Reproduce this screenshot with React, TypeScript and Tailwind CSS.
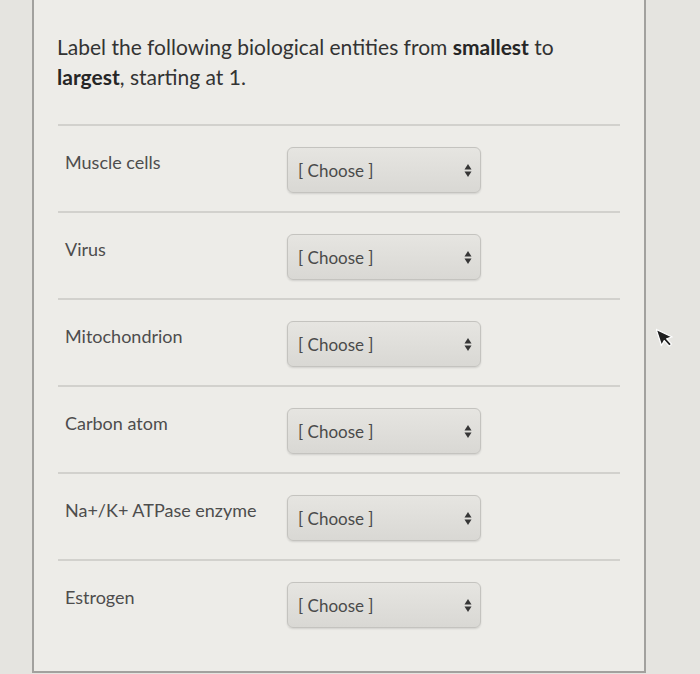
import React from "react";

const items = [
  "Muscle cells",
  "Virus",
  "Mitochondrion",
  "Carbon atom",
  "Na+/K+ ATPase enzyme",
  "Estrogen",
];

function Arrows() {
  return (
    <svg width="8" height="15" viewBox="0 0 8 15" className="shrink-0">
      <path d="M4 1 L7.5 6.5 L0.5 6.5 Z" fill="#363636" />
      <path d="M4 14 L7.5 8.5 L0.5 8.5 Z" fill="#363636" />
    </svg>
  );
}

function ChooseBox() {
  return (
    <div className="flex h-[46px] w-[194px] items-center justify-between rounded-[6px] border border-[#c4c3bf] bg-gradient-to-b from-[#e6e5e1] to-[#d9d8d4] pl-[10px] pr-[8px] shadow-[0_1px_2px_rgba(0,0,0,0.12)]">
      <span className="text-[17px] leading-none text-[#4a4a4a]">[ Choose ]</span>
      <Arrows />
    </div>
  );
}

export default function App() {
  return (
    <div
      className="relative h-[674px] w-[700px] overflow-hidden bg-[#e5e4e0]"
      style={{ fontFamily: "Lato, 'Open Sans', 'Noto Sans', sans-serif" }}
    >
      <div className="ml-[32px] flex h-[673px] w-[614px] flex-col border-x-2 border-b-2 border-[#a2a19e] bg-[#edece8]">
        <div className="pl-[23px] pt-[32px] pb-[32px] text-[21px] leading-[30px] text-[#333]">
          <p>
            Label the following biological entities from <b className="font-bold text-[#262626]">smallest</b> to
          </p>
          <p>
            <b className="font-bold text-[#262626]">largest</b>, starting at 1.
          </p>
        </div>
        {items.map((label, i) => (
          <div key={label} className={i === items.length - 1 ? "flex-1" : ""}>
            <div className="ml-[24px] mr-[24px] h-[2px] bg-[#d2d1cd]" />
            <div className="flex h-[85px] items-start pl-[31px]">
              <div className="mt-[24px] w-[222px] text-[18px] leading-[24px] text-[#4d4d4d]">{label}</div>
              <div className="mt-[21px]">
                <ChooseBox />
              </div>
            </div>
          </div>
        ))}
      </div>
      <svg
        className="absolute left-[656px] top-[325px]"
        width="20"
        height="26"
        viewBox="0 0 20 26"
      >
        <path
          d="M3 2 L3 19 L7.2 15.2 L10.2 22 L13 20.8 L10.1 14.2 L15.8 14.2 Z"
          fill="#1f1f1f"
          stroke="#fff"
          strokeWidth="1.3"
          strokeLinejoin="round"
          transform="rotate(-18 9 12)"
        />
      </svg>
    </div>
  );
}
